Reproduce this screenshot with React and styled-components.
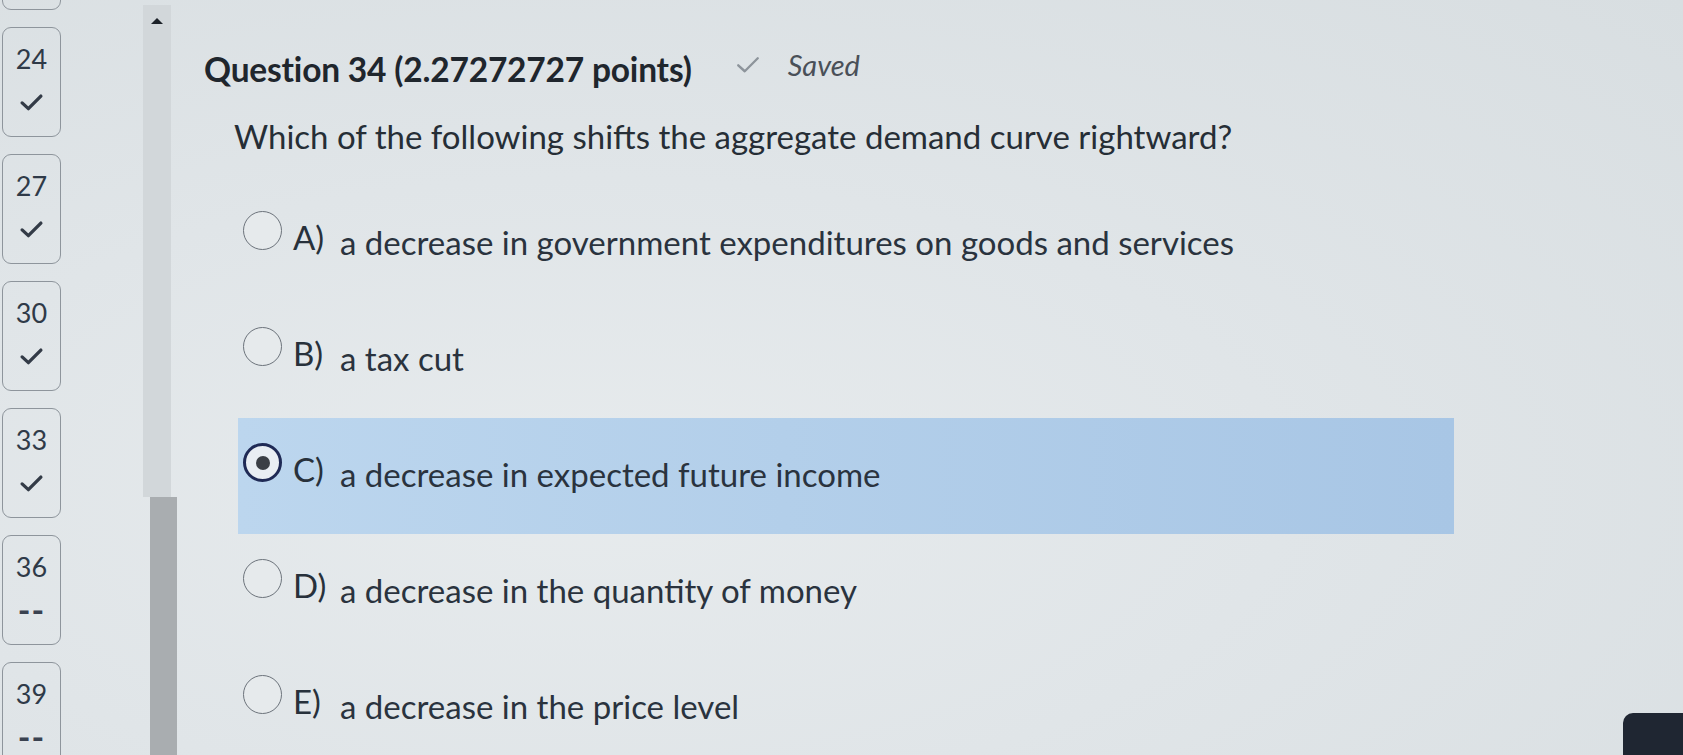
import React from "react";
import styled, { createGlobalStyle } from "styled-components";

const Global = createGlobalStyle`
  html, body { margin: 0; padding: 0; height: 100%; overflow: hidden; }
  body {
    font-family: Lato, "Noto Sans", sans-serif;
    background: radial-gradient(ellipse at 35% 65%, #e7ebed 0%, #e0e5e8 45%, #d8dee1 100%);
    color: #2d3842;
  }
  #root { height: 100%; }
`;

const Page = styled.div`
  display: flex;
  height: 755px;
  overflow: hidden;
`;

const Sidebar = styled.nav`
  width: 143px;
  flex: none;
  display: flex;
  flex-direction: column;
  gap: 17px;
  margin-top: -100px;
  padding-left: 2px;
  box-sizing: border-box;
`;

const Card = styled.div`
  width: 59px;
  height: 110px;
  flex: none;
  box-sizing: border-box;
  border: 1.5px solid #8e959c;
  border-radius: 9px;
  display: flex;
  flex-direction: column;
  align-items: center;
  padding-top: 15px;
`;

const CardNum = styled.span`
  font-size: 27px;
  line-height: 32px;
  color: #2f3a48;
`;

const CardMark = styled.div`
  margin-top: 16px;
  height: 22px;
  display: flex;
  align-items: center;
  justify-content: center;
  color: #333b47;
`;

const Dashes = styled.span`
  font-size: 34px;
  font-weight: 700;
  letter-spacing: 1px;
  line-height: 22px;
  color: #3a4250;
`;

const Track = styled.div`
  width: 34px;
  flex: none;
  margin-top: 5px;
  display: flex;
  flex-direction: column;
`;

const TrackUpper = styled.div`
  width: 28px;
  height: 492px;
  background: #d2d7da;
  display: flex;
  justify-content: center;
  padding-top: 13px;
  box-sizing: border-box;
`;

const Arrow = styled.div`
  width: 0;
  height: 0;
  border-left: 6px solid transparent;
  border-right: 6px solid transparent;
  border-bottom: 6px solid #1c2229;
`;

const Thumb = styled.div`
  flex: 1;
  width: 27px;
  margin-left: 7px;
  background: #a9adb0;
`;

const Main = styled.main`
  flex: 1;
  padding-left: 27px;
  padding-top: 48px;
  display: flex;
  flex-direction: column;
`;

const Header = styled.div`
  display: flex;
  align-items: center;
`;

const Title = styled.h2`
  margin: 0;
  font-size: 33.5px;
  line-height: 40px;
  font-weight: 700;
  color: #1f262d;
  letter-spacing: -0.2px;
`;

const SavedTag = styled.span`
  margin-left: 43px;
  margin-bottom: 8px;
  display: flex;
  align-items: center;
  gap: 27px;
  font-style: italic;
  font-size: 29px;
  line-height: 34px;
  color: #4a5058;
`;

const Question = styled.p`
  margin: 26px 0 0 30px;
  font-size: 33px;
  line-height: 40px;
  color: #262e36;
`;

const Options = styled.div`
  margin-top: 30px;
  margin-left: 34px;
  width: 1216px;
  display: flex;
  flex-direction: column;
`;

const Row = styled.label`
  height: 116px;
  flex: none;
  display: flex;
  align-items: flex-start;
  padding-left: 5px;
  padding-top: 25px;
  box-sizing: border-box;
  background: ${(p) =>
    p.$selected
      ? "linear-gradient(90deg, #bcd6ee 0%, #b3cfea 45%, #a8c6e5 100%)"
      : "transparent"};
`;

const Radio = styled.span`
  width: 39px;
  height: 39px;
  flex: none;
  box-sizing: border-box;
  border-radius: 50%;
  border: ${(p) => (p.$checked ? "3px solid #1f2a55" : "1.5px solid #6c737b")};
  background: ${(p) => (p.$checked ? "#e9eef3" : "#e6eaec")};
  display: flex;
  align-items: center;
  justify-content: center;
`;

const Dot = styled.span`
  width: 14px;
  height: 14px;
  border-radius: 50%;
  background: #3a3f45;
`;

const Letter = styled.span`
  margin-left: 11px;
  margin-top: 6px;
  width: 47px;
  font-size: 33px;
  line-height: 40px;
  color: #28313b;
`;

const OptionText = styled.span`
  margin-top: 11px;
  font-size: 33px;
  line-height: 40px;
  color: #2a333e;
`;

const CornerButton = styled.div`
  position: fixed;
  right: 0;
  bottom: 0;
  width: 60px;
  height: 42px;
  background: #1f2632;
  border-top-left-radius: 10px;
`;

const Check = ({ size = 24, color = "currentColor", width = 3.2 }) => (
  <svg width={size} height={size * 0.75} viewBox="0 0 24 18" fill="none">
    <path
      d="M3 9.5 L9 15 L21 3"
      stroke={color}
      strokeWidth={width}
      strokeLinecap="round"
      strokeLinejoin="round"
    />
  </svg>
);

const cards = [
  { n: 21, done: true },
  { n: 24, done: true },
  { n: 27, done: true },
  { n: 30, done: true },
  { n: 33, done: true },
  { n: 36, done: false },
  { n: 39, done: false },
];

const options = [
  { l: "A)", t: "a decrease in government expenditures on goods and services" },
  { l: "B)", t: "a tax cut" },
  { l: "C)", t: "a decrease in expected future income", sel: true },
  { l: "D)", t: "a decrease in the quantity of money" },
  { l: "E)", t: "a decrease in the price level" },
];

export default function App() {
  return (
    <>
      <Global />
      <Page>
        <Sidebar>
          {cards.map((c) => (
            <Card key={c.n}>
              <CardNum>{c.n}</CardNum>
              <CardMark>
                {c.done ? <Check size={25} /> : <Dashes>--</Dashes>}
              </CardMark>
            </Card>
          ))}
        </Sidebar>
        <Track>
          <TrackUpper>
            <Arrow />
          </TrackUpper>
          <Thumb />
        </Track>
        <Main>
          <Header>
            <Title>Question 34 (2.27272727 points)</Title>
            <SavedTag>
              <Check size={26} color="#8d949b" width={2.2} />
              Saved
            </SavedTag>
          </Header>
          <Question>
            Which of the following shifts the aggregate demand curve rightward?
          </Question>
          <Options>
            {options.map((o) => (
              <Row key={o.l} $selected={o.sel}>
                <Radio $checked={o.sel}>{o.sel && <Dot />}</Radio>
                <Letter>{o.l}</Letter>
                <OptionText>{o.t}</OptionText>
              </Row>
            ))}
          </Options>
        </Main>
      </Page>
      <CornerButton />
    </>
  );
}
